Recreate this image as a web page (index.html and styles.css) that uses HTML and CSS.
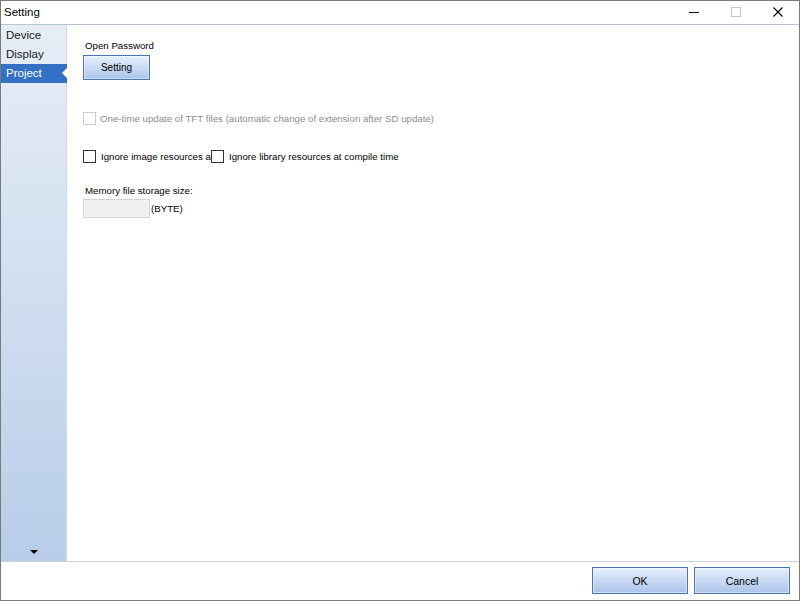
FILE: index.html
```html
<!DOCTYPE html>
<html>
<head>
<meta charset="utf-8">
<title>Setting</title>
<link rel="stylesheet" href="styles.css">
</head>
<body>
<div class="window">
  <div class="titlebar">
    <span class="title">Setting</span>
    <div class="controls">
      <span class="ctl"><svg width="10" height="10" viewBox="0 0 10 10"><line x1="0" y1="5.5" x2="10" y2="5.5" stroke="#000" stroke-width="1"/></svg></span>
      <span class="ctl"><svg width="10" height="10" viewBox="0 0 10 10"><rect x="0.5" y="0.5" width="9" height="9" fill="none" stroke="#c4c4c4" stroke-width="1"/></svg></span>
      <span class="ctl"><svg width="10" height="10" viewBox="0 0 10 10"><path d="M0.5 0.5 L9.5 9.5 M9.5 0.5 L0.5 9.5" stroke="#000" stroke-width="1.1" fill="none"/></svg></span>
    </div>
  </div>
  <div class="main">
    <div class="sidebar">
      <div class="nav-item">Device</div>
      <div class="nav-item">Display</div>
      <div class="nav-item selected">Project</div>
      <div class="nav-more"><span class="arrow"></span></div>
    </div>
    <div class="content">
      <div class="label first">Open Password</div>
      <button class="btn btn-setting">Setting</button>
      <div class="check-row disabled row-tft">
        <span class="box"></span>
        <span class="text">One-time update of TFT files (automatic change of extension after SD update)</span>
      </div>
      <div class="check-row row-ignore">
        <div class="check-item clip">
          <span class="box"></span>
          <span class="text">Ignore image resources a</span>
        </div>
        <div class="check-item">
          <span class="box"></span>
          <span class="text">Ignore library resources at compile time</span>
        </div>
      </div>
      <div class="label mem">Memory file storage size:</div>
      <div class="input-row">
        <span class="input"></span>
        <span class="unit">(BYTE)</span>
      </div>
    </div>
  </div>
  <div class="footer">
    <button class="btn btn-dlg">OK</button>
    <button class="btn btn-dlg">Cancel</button>
  </div>
</div>
</body>
</html>
```
FILE: styles.css
```css
* { box-sizing: border-box; }
html, body { margin: 0; padding: 0; background: #fff; }
body { font-family: "Liberation Sans", Arial, sans-serif; }

.window {
  width: 800px;
  height: 601px;
  border: 1px solid #7a7a7a;
  display: flex;
  flex-direction: column;
  background: #fff;
}

.titlebar {
  height: 24px;
  border-bottom: 1px solid #b8c4d2;
  display: flex;
  align-items: center;
  justify-content: space-between;
  flex: none;
}
.title {
  font-size: 11.5px;
  padding-left: 3px;
  color: #000;
  margin-top: -1px;
}
.controls { display: flex; height: 100%; }
.ctl {
  width: 42px;
  display: flex;
  align-items: center;
  justify-content: center;
  margin-top: -2px;
}
.ctl svg { display: block; }

.main {
  height: 537px;
  flex: none;
  display: flex;
  border-bottom: 1px solid #c9d3df;
}

.sidebar {
  width: 66px;
  flex: none;
  padding-top: 1px;
  background: linear-gradient(to bottom, #e6edf7 0%, #d3e0f0 45%, #b8cdea 100%);
  border-right: 1px solid #d2d9e3;
  display: flex;
  flex-direction: column;
}
.nav-item {
  height: 19px;
  line-height: 19px;
  font-size: 11.5px;
  padding-left: 5px;
  color: #1a1a1a;
  position: relative;
}
.nav-item.selected {
  background: #3470c6;
  color: #fff;
  margin-right: -1px;
}
.nav-item.selected::after {
  content: "";
  position: absolute;
  right: 0;
  top: 4px;
  border-top: 5px solid transparent;
  border-bottom: 5px solid transparent;
  border-right: 5px solid #fff;
}
.nav-more {
  margin-top: auto;
  padding-bottom: 7px;
  display: flex;
  justify-content: center;
}
.arrow {
  width: 0;
  height: 0;
  border-left: 4px solid transparent;
  border-right: 4px solid transparent;
  border-top: 4px solid #000;
  margin-left: 1px;
}

.content {
  flex: 1;
  padding-left: 17px;
  font-size: 9.7px;
  color: #000;
  display: flex;
  flex-direction: column;
  align-items: flex-start;
}
.label { line-height: 12px; white-space: nowrap; }
.label.first { margin-top: 15px; padding-left: 1px; }

.btn {
  font-family: "Liberation Sans", Arial, sans-serif;
  font-size: 10px;
  color: #000;
  border: 1px solid #4c74ae;
  background: linear-gradient(to bottom, #e6effb 0%, #c9daf3 50%, #a9c4ea 100%);
  box-shadow: inset 0 0 0 1px rgba(255,255,255,0.45);
  padding: 0;
  margin: 0;
}
.btn-setting {
  width: 67px;
  height: 25px;
  margin-top: 3px;
  margin-left: -1px;
}

.check-row {
  display: flex;
  align-items: center;
  height: 14px;
  white-space: nowrap;
}
.box {
  width: 13px;
  height: 13px;
  border: 1px solid #333;
  background: #fff;
  flex: none;
}
.check-row .text, .check-item .text { margin-left: 5px; }
.row-tft { margin-top: 31px; margin-left: -1px; }
.row-tft.disabled .box { border-color: #cccccc; }
.row-tft.disabled .text { color: #8d8d8d; margin-left: 4px; }
.row-ignore { margin-top: 24px; margin-left: -1px; }
.check-item { display: flex; align-items: center; }
.check-item.clip { width: 128px; }

.label.mem { margin-top: 22px; padding-left: 1px; }
.input-row {
  display: flex;
  align-items: center;
  margin-top: 2px;
  margin-left: -1px;
}
.input {
  width: 67px;
  height: 19px;
  background: #f0f0f0;
  border: 1px solid #d4d4d4;
}
.unit { margin-left: 1px; }

.footer {
  flex: 1;
  display: flex;
  justify-content: flex-end;
  align-items: flex-start;
  padding-top: 5px;
  padding-right: 9px;
  gap: 6px;
}
.btn-dlg {
  width: 96px;
  height: 27px;
  font-size: 10.5px;
}
```
